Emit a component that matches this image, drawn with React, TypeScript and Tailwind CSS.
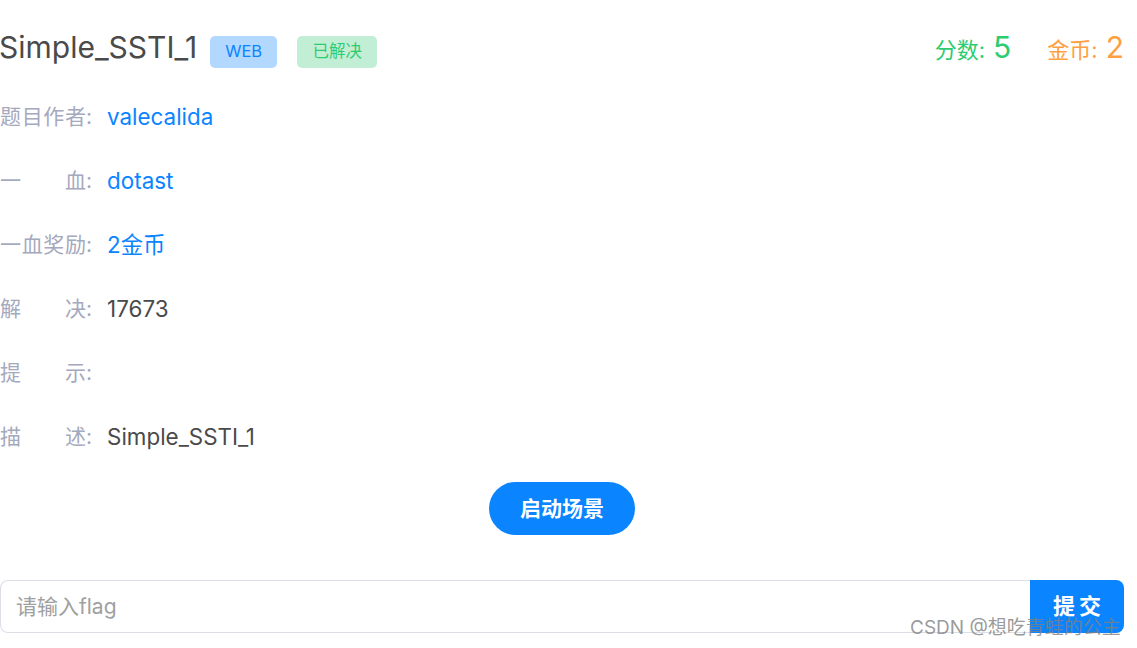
import React from "react";

const FONT = 'Inter, "Noto Sans CJK SC", "Noto Sans", sans-serif';

function Row({ label, value, valueClass }: { label: string; value?: string; valueClass?: string }) {
  return (
    <div className="flex items-center h-[64px]">
      <span className="inline-block w-[86px] text-[21px] text-[#a4a9bd] [text-align-last:justify] whitespace-nowrap">{label}</span>
      <span className="text-[21px] text-[#a4a9bd]">:</span>
      {value !== undefined && <span className={`ml-[15px] text-[22.4px] ${valueClass ?? ""}`}>{value}</span>}
    </div>
  );
}

export default function App() {
  return (
    <div className="relative w-[1137px] h-[648px] bg-white overflow-hidden" style={{ fontFamily: FONT }}>
      <div className="w-[1124px]">
        <div className="flex items-center justify-between h-[64px] mt-[15px]">
          <div className="flex items-center">
            <span className="text-[30px] text-[#4a4a4a] -ml-[1px]">Simple_SSTI_1</span>
            <span className="ml-[13px] mt-[9px] h-[32px] w-[67px] flex items-center justify-center rounded-[5px] bg-[#b3d8ff] text-[#0a84ff] text-[16.5px]">WEB</span>
            <span className="ml-[20px] mt-[9px] h-[32px] w-[80px] flex items-center justify-center rounded-[5px] bg-[#c2eed6] text-[#2ecc71] text-[16.5px]">已解决</span>
          </div>
          <div className="flex items-baseline">
            <span className="text-[#2ecc71] text-[22px]">分数:</span>
            <span className="text-[#2ecc71] text-[30px] ml-[8px]">5</span>
            <span className="text-[#ff9f43] text-[22px] ml-[36px]">金币:</span>
            <span className="text-[#ff9f43] text-[30px] ml-[8px]">2</span>
          </div>
        </div>
        <div className="mt-[6px]">
          <Row label="题目作者" value="valecalida" valueClass="text-[#0a84ff]" />
          <Row label="一血" value="dotast" valueClass="text-[#0a84ff]" />
          <Row label="一血奖励" value="2金币" valueClass="text-[#0a84ff]" />
          <Row label="解决" value="17673" valueClass="text-[#4a4a4a]" />
          <Row label="提示" />
          <Row label="描述" value="Simple_SSTI_1" valueClass="text-[#4a4a4a]" />
        </div>
        <div className="flex justify-center mt-[13px]">
          <button className="h-[53px] w-[146px] rounded-full bg-[#0a84ff] text-white text-[21px] font-bold">启动场景</button>
        </div>
        <div className="flex mt-[45px] h-[53px]">
          <div className="flex-1 flex items-center border border-[#dcdfe6] border-r-0 rounded-l-[8px] pl-[15px] text-[21px] text-[#a0a0a0]">请输入flag</div>
          <button className="w-[94px] h-[53px] bg-[#0a84ff] text-white text-[22px] font-bold rounded-r-[8px] tracking-[4px] pl-[4px]">提交</button>
        </div>
      </div>
      <div className="absolute left-[910px] top-[618px] text-[19px] text-[#808080]/80 leading-none whitespace-nowrap">CSDN @想吃青蛙的公主</div>
    </div>
  );
}
